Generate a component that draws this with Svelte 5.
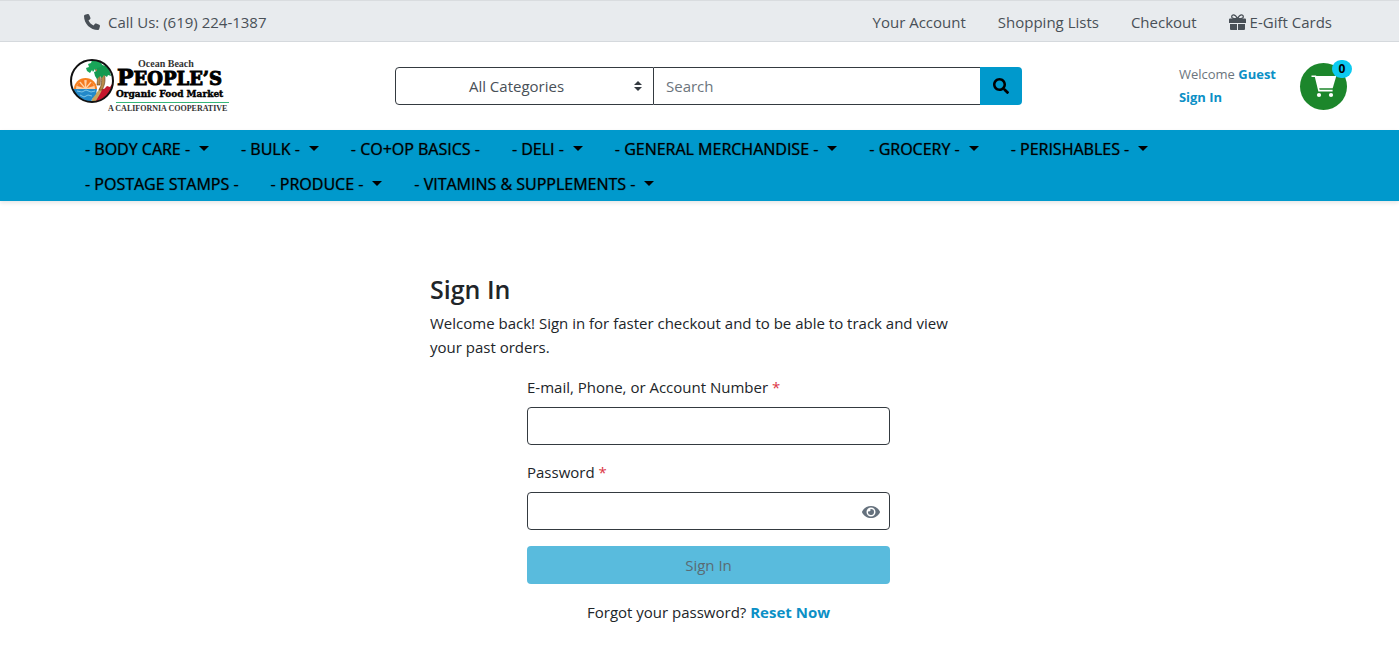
<script>
  const topLinks = ['Your Account', 'Shopping Lists', 'Checkout'];
  const categories = [
    { name: 'BODY CARE', menu: true },
    { name: 'BULK', menu: true },
    { name: 'CO+OP BASICS', menu: false },
    { name: 'DELI', menu: true },
    { name: 'GENERAL MERCHANDISE', menu: true },
    { name: 'GROCERY', menu: true },
    { name: 'PERISHABLES', menu: true },
    { name: 'POSTAGE STAMPS', menu: false },
    { name: 'PRODUCE', menu: true },
    { name: 'VITAMINS & SUPPLEMENTS', menu: true }
  ];
  let showPassword = $state(false);
</script>

<div class="topbar">
  <a class="toplink phone" href="#phone">
    <svg width="16" height="16" viewBox="0 0 512 512" aria-hidden="true"><path d="M164.9 24.6c-7.7-18.6-28-28.5-47.4-23.2l-88 24C12.1 30.2 0 46 0 64C0 311.4 200.6 512 448 512c18 0 33.8-12.1 38.6-29.5l24-88c5.3-19.4-4.6-39.7-23.2-47.4l-96-40c-16.3-6.8-35.2-2.1-46.3 11.6L304.7 368C234.3 334.7 177.3 277.7 144 207.3L193.3 167c13.7-11.2 18.4-30 11.6-46.3l-40-96z" /></svg>
    <span>Call Us: (619) 224-1387</span>
  </a>
  <div class="toplinks">
    {#each topLinks as link}
      <a class="toplink" href="#top">{link}</a>
    {/each}
    <a class="toplink gift" href="#gift">
      <svg width="17" height="17" viewBox="0 0 17 17" aria-hidden="true">
        <path d="M1 4.5h15a1 1 0 0 1 1 1V9H0V5.500a1 1 0 0 1 1-1zM1 10h7v6H2a1 1 0 0 1-1-1zM9 10h7v5a1 1 0 0 1-1 1H9z" />
        <path d="M8.500 4.600C7 1.800 5.600.9 4.400.9a1.700 1.700 0 0 0-1.100 3c.6.5 2.500.7 5.200.7zM8.500 4.600C10 1.800 11.400.9 12.600.9a1.700 1.700 0 0 1 1.100 3c-.6.5-2.500.7-5.200.7z" fill="none" stroke="currentColor" stroke-width="1.300" />
      </svg>
      <span>E-Gift Cards</span>
    </a>
  </div>
</div>

<header class="header">
  <a class="logo" href="#home">
    <svg width="162" height="56" viewBox="0 0 162 56">
      <defs><clipPath id="disc"><circle cx="22" cy="23" r="21" /></clipPath></defs>
      <circle cx="22" cy="23" r="21" fill="#fff" />
      <g clip-path="url(#disc)">
        <path d="M22 45l1-5 5-5 2-5 4 1 3-3 3 1 2-3v12L32 45z" fill="#c4162c" />
        <path d="M21 45l2-7 5-5 2-4 3 1-3 6-3 5-2 4z" fill="#c9a35c" />
        <path d="M29 32c3-5 3-10 2-16l3-1c2 6 1 12-2 17z" fill="#b98a4a" stroke="#5b3a18" stroke-width=".6" />
        <path d="M27 27c1-6 0-12-2-17l2-1c3 6 4 12 3 18z" fill="#b98a4a" stroke="#5b3a18" stroke-width=".6" />
        <path d="M17 13l-1-3 3-1-1-3 3-1 1-3 4 0 3 1 2 2 2 3-1 3-3-1-1 2-3-1-2 3-1-2-2 3z" fill="#18a558" />
        <path d="M25 18l-1-4 3-1 0-3 4-1 1-2 4 1 3 3 1 3 1 4-3-1-1 2-3-2-2 3-2-2-3 3z" fill="#149a50" />
        <path d="M4 31a11.500 11 0 0 1 23 0z" fill="#f58220" />
        <path d="M6 31a9.500 9 0 0 1 19 0z" fill="#ffd0a3" />
        <path d="M14 30l-7-2 2-4zM15 29l-5-6 4-2zM16 29l1-8 4 2zM17 30l5-6 2 4z" fill="#f47920" />
        <path d="M3 31h24l-1 5-4 5-1 4C9 44 4 37 3 31z" fill="#2389c9" />
        <path d="M7 33l5 1 4-2 5 2 4-1M10 37l4 2 4-2 4 1" fill="none" stroke="#96d7ef" stroke-width=".8" />
      </g>
      <circle cx="22" cy="23" r="21" fill="none" stroke="#111" stroke-width="2" />
      <text class="l-beach" x="68" y="9">Ocean Beach</text>
      <text class="l-name" x="47" y="27"><tspan class="l-cap">P</tspan>EOPLE’S</text>
      <text class="l-sub" x="46" y="39">Organic Food Market</text>
      <path d="M46 44.500h113" stroke="#35b779" stroke-width="1.200" />
      <text class="l-coop" x="38" y="53">A CALIFORNIA COOPERATIVE</text>
    </svg>
  </a>

  <form class="search" onsubmit={(e) => e.preventDefault()}>
    <div class="category">
      <select aria-label="Category"><option>All Categories</option></select>
      <svg class="sort" width="8" height="10" viewBox="0 0 8 10" aria-hidden="true"><path d="M4 0l4 4H0zM4 10l4-4H0z" /></svg>
    </div>
    <input type="text" aria-label="Search" placeholder="Search" />
    <button class="go" aria-label="Submit search">
      <svg width="16" height="16" viewBox="0 0 512 512" aria-hidden="true"><path d="M505 442.7L405.3 343c-4.5-4.5-10.6-7-17-7H372c27.6-35.3 44-79.7 44-128C416 93.1 322.9 0 208 0S0 93.1 0 208s93.1 208 208 208c48.3 0 92.7-16.4 128-44v16.3c0 6.4 2.5 12.5 7 17l99.7 99.7c9.4 9.4 24.6 9.4 33.9 0l28.3-28.3c9.4-9.4 9.4-24.6.1-34zM208 336c-70.7 0-128-57.2-128-128 0-70.7 57.2-128 128-128 70.7 0 128 57.2 128 128 0 70.7-57.2 128-128 128z" /></svg>
    </button>
  </form>

  <div class="account">
    <div class="welcome">
      <span>Welcome <b>Guest</b></span>
      <a href="#signin">Sign In</a>
    </div>
    <button class="cart" aria-label="Cart">
      <svg width="47" height="47" viewBox="0 0 47 47" aria-hidden="true">
        <path d="M15.5 13h20.8l-3.6 12.2H18.6z" fill="#fff" />
        <path d="M11.5 13.2h4l3.5 14.4h13.6" fill="none" stroke="#fff" stroke-width="1.6" />
        <circle cx="19" cy="32" r="2.1" fill="#fff" /><circle cx="31" cy="32" r="2.1" fill="#fff" />
      </svg>
      <span class="badge">0</span>
    </button>
  </div>
</header>

<nav class="nav">
  {#each categories as c}
    <a href="#category">- {c.name} -{#if c.menu}<i class="caret"></i>{/if}</a>
  {/each}
</nav>

<main class="main">
  <h1>Sign In</h1>
  <p class="intro">Welcome back! Sign in for faster checkout and to be able to track and view your past orders.</p>
  <form class="form" onsubmit={(e) => e.preventDefault()}>
    <div class="field">
      <label for="login">E-mail, Phone, or Account Number <span class="req">*</span></label>
      <input id="login" type="text" />
    </div>
    <div class="field">
      <label for="password">Password <span class="req">*</span></label>
      <div class="password">
        <input id="password" type={showPassword ? 'text' : 'password'} />
        <button type="button" class="eye" aria-label="Show password" onclick={() => (showPassword = !showPassword)}>
          <svg width="18" height="16" viewBox="0 0 576 512" aria-hidden="true"><path d="M572.52 241.4C518.29 135.59 410.93 64 288 64S57.68 135.64 3.48 241.41a32.35 32.35 0 0 0 0 29.19C57.71 376.41 165.07 448 288 448s230.32-71.64 284.52-177.41a32.35 32.35 0 0 0 0-29.19zM288 400a144 144 0 1 1 144-144 143.93 143.93 0 0 1-144 144zm0-240a95.31 95.31 0 0 0-25.31 3.79 47.85 47.85 0 0 1-66.9 66.9A95.78 95.78 0 1 0 288 160z" /></svg>
        </button>
      </div>
    </div>
    <button class="submit" disabled>Sign In</button>
    <p class="forgot">Forgot your password? <a href="#reset">Reset Now</a></p>
  </form>
</main>

<style>
  :global(body) {
    background: #fff;
    color: #212529;
    font: 15px/24px 'Open Sans', 'Noto Sans', sans-serif;
  }
  :global(#app) *, :global(#app) *::before { box-sizing: border-box; }
  a { text-decoration: none; color: inherit; }
  button, input, select { font: inherit; margin: 0; }
  svg { display: block; fill: currentColor; }

  .topbar {
    display: flex;
    justify-content: space-between;
    align-items: center;
    padding: 9px 67px 7px 84px;
    background: #e8ebee;
    border-top: 1px solid #d9dcdf;
    border-bottom: 1px solid #d5d9dd;
    color: #495057;
  }
  .toplinks { display: flex; gap: 32px; }
  .toplink { display: flex; align-items: center; gap: 8px; }
  .gift { gap: 4px; }

  .header {
    display: grid;
    grid-template-columns: 1fr minmax(0, 627px) 1fr;
    align-items: center;
    padding: 16px 52px 16px 70px;
  }
  .l-beach, .l-coop { font-family: 'Liberation Serif', serif; font-weight: 700; fill: #333; }
  .l-beach { font-size: 10px; }
  .l-coop { font-size: 8px; }
  .l-name, .l-sub { font-family: 'DejaVu Serif', serif; font-weight: 700; fill: #000; stroke: #000; }
  .l-name { font-size: 18px; stroke-width: 1; }
  .l-cap { font-size: 22px; }
  .l-sub { font-size: 9px; stroke-width: .4; }

  .search { display: flex; height: 38px; }
  .category { position: relative; width: 259px; flex: none; }
  .category select {
    width: 100%;
    height: 100%;
    padding: 0 28px 0 12px;
    appearance: none;
    text-align-last: center;
    background: #fff;
    color: #495057;
    border: 1px solid #343a40;
    border-radius: 4px 0 0 4px;
  }
  .sort { position: absolute; right: 12px; top: 14px; color: #343a40; pointer-events: none; }
  .search input {
    flex: 1;
    min-width: 0;
    padding: 0 12px;
    border: 1px solid #343a40;
    border-width: 1px 0;
    color: #495057;
  }
  .search input::placeholder { color: #6c757d; opacity: 1; }
  .go {
    display: grid;
    place-items: center;
    width: 42px;
    border: 0;
    border-radius: 0 4px 4px 0;
    background: #0099cc;
    color: #000;
  }
  .account { display: flex; justify-content: flex-end; align-items: center; gap: 24px; }
  .welcome { display: flex; flex-direction: column; font-size: 13px; line-height: 23px; color: #6c757d; }
  .welcome b, .welcome a, .forgot a { font-weight: 700; color: #0c90c6; }
  .cart {
    position: relative;
    padding: 0;
    border: 0;
    border-radius: 50%;
    background: #1c862b;
  }
  .badge {
    position: absolute;
    top: -3px;
    right: -5px;
    width: 20px;
    border-radius: 9px;
    background: #0dcaf0;
    color: #000;
    font-size: 12px;
    font-weight: 700;
    line-height: 18px;
    text-align: center;
  }

  .nav {
    display: flex;
    flex-wrap: wrap;
    padding: 1px 69px 0;
    background: #0099cc;
    color: #000;
    font-size: 16px;
    font-weight: 500;
    text-shadow: 0 0 1px rgba(0, 0, 0, .7);
    box-shadow: 0 2px 4px rgba(0, 0, 0, .1);
  }
  .nav a { padding: 1px 16px 0; line-height: 34px; white-space: nowrap; }
  .caret {
    display: inline-block;
    margin-left: 9px;
    vertical-align: 4px;
    border: 5px solid transparent;
    border-top-color: #000;
    border-bottom: 0;
  }

  .main { padding: 72px 0 44px 18px; }
  h1, .intro { max-width: 557px; margin: 0 auto; padding-right: 16px; }
  h1 { padding-bottom: 6px; font-size: 25px; line-height: 32px; font-weight: 600; }
  .intro { margin-bottom: 17px; }
  .form { display: flex; flex-direction: column; gap: 16px; width: 363px; max-width: 100%; margin: 0 auto; }
  .field { display: flex; flex-direction: column; gap: 9px; line-height: 22px; }
  .req { color: #dc3545; }
  .field input {
    display: block;
    width: 100%;
    height: 38px;
    padding: 0 12px;
    background: #fff;
    border: 1px solid #343a40;
    border-radius: 4px;
  }
  .password { position: relative; }
  .eye { position: absolute; right: 10px; top: 12px; padding: 0; border: 0; background: none; color: #65717d; }
  .submit { height: 38px; border: 0; border-radius: 4px; background: #59bbdd; color: #596b73; }
  .forgot { margin: 0; text-align: center; }
</style>
